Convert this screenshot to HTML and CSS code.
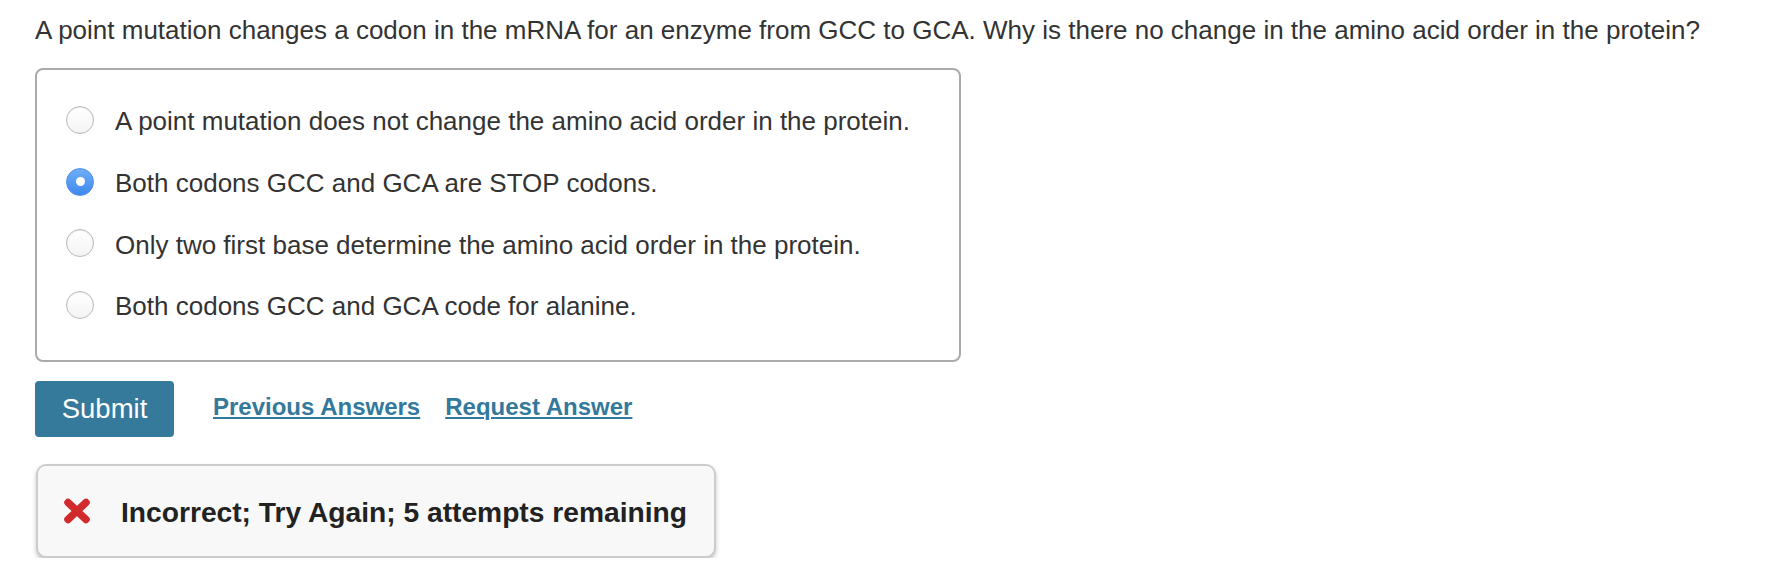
FILE: index.html
```html
<!DOCTYPE html>
<html lang="en">
<head>
<meta charset="utf-8">
<title>Question</title>
<link rel="stylesheet" href="styles.css">
</head>
<body>
<main class="page">
  <p class="question">A point mutation changes a codon in the mRNA for an enzyme from GCC to GCA. Why is there no change in the amino acid order in the protein?</p>
  <div class="choices">
    <label class="choice"><span class="radio"></span><span class="choice-text">A point mutation does not change the amino acid order in the protein.</span></label>
    <label class="choice"><span class="radio checked"></span><span class="choice-text">Both codons GCC and GCA are STOP codons.</span></label>
    <label class="choice"><span class="radio"></span><span class="choice-text">Only two first base determine the amino acid order in the protein.</span></label>
    <label class="choice"><span class="radio"></span><span class="choice-text">Both codons GCC and GCA code for alanine.</span></label>
  </div>
  <div class="actions">
    <button class="submit" type="button">Submit</button>
    <a class="link" href="#">Previous Answers</a>
    <a class="link" href="#">Request Answer</a>
  </div>
  <div class="feedback">
    <svg class="x-icon" viewBox="0 0 28 26" width="28" height="26" aria-hidden="true">
      <path d="M5 4.5 L23 21.5 M23 4.5 L5 21.5" stroke="#d02a2d" stroke-width="7.5" stroke-linecap="round" fill="none"/>
    </svg>
    <span class="feedback-text">Incorrect; Try Again; 5 attempts remaining</span>
  </div>
</main>
</body>
</html>
```

FILE: styles.css
```css
html, body {
  margin: 0;
  padding: 0;
  background: #ffffff;
}

body {
  font-family: "Liberation Sans", Arial, Helvetica, sans-serif;
  color: #333333;
}

.page {
  padding: 12px 0 0 35px;
}

.question {
  margin: 0;
  font-size: 26px;
  line-height: 37px;
  white-space: nowrap;
}

.choices {
  box-sizing: border-box;
  width: 926px;
  margin-top: 19px;
  border: 2px solid #aaaaaa;
  border-radius: 8px;
  padding: 21px 0 22px 29px;
  display: flex;
  flex-direction: column;
}

.choice {
  display: flex;
  align-items: center;
  height: 61.7px;
  font-size: 26px;
  line-height: 37px;
}

.radio {
  box-sizing: border-box;
  flex: 0 0 auto;
  width: 28px;
  height: 28px;
  border-radius: 50%;
  border: 1px solid #b9b9b9;
  background: linear-gradient(#ffffff, #f4f4f4);
  box-shadow: inset 0 1px 1px rgba(0,0,0,0.08);
  margin-right: 21px;
  margin-bottom: 4px;
  position: relative;
}

.radio.checked {
  border: 1px solid #4f8fe6;
  background: linear-gradient(#6eaef8, #3f88ee);
  box-shadow: none;
}

.radio.checked::after {
  content: "";
  position: absolute;
  left: 50%;
  top: 50%;
  width: 9px;
  height: 9px;
  margin: -4.5px 0 0 -4.5px;
  border-radius: 50%;
  background: #ffffff;
}

.actions {
  display: flex;
  align-items: center;
  margin-top: 19px;
}

.submit {
  box-sizing: border-box;
  width: 139px;
  height: 56px;
  border: none;
  border-radius: 4px;
  background: #35799b;
  color: #ffffff;
  font-family: "Liberation Sans", Arial, Helvetica, sans-serif;
  font-size: 27.5px;
  padding: 0;
  margin-right: 39px;
}

.link {
  font-size: 24px;
  font-weight: bold;
  color: #33799b;
  text-decoration: underline;
  text-decoration-thickness: 2px;
  text-underline-offset: 2px;
  margin-right: 25px;
  margin-top: -4px;
}

.feedback {
  display: inline-flex;
  align-items: center;
  box-sizing: border-box;
  height: 94px;
  margin-top: 27px;
  margin-left: 1px;
  padding: 0 27px 0 25px;
  background: #f8f8f8;
  border: 2px solid #cccccc;
  border-radius: 10px;
  box-shadow: 0 3px 4px rgba(0,0,0,0.22);
}

.x-icon {
  display: block;
  margin-right: 30px;
  margin-top: 1px;
}

.feedback-text {
  font-size: 28.2px;
  font-weight: bold;
  color: #222222;
  line-height: 37px;
  margin-top: 4px;
}
```
